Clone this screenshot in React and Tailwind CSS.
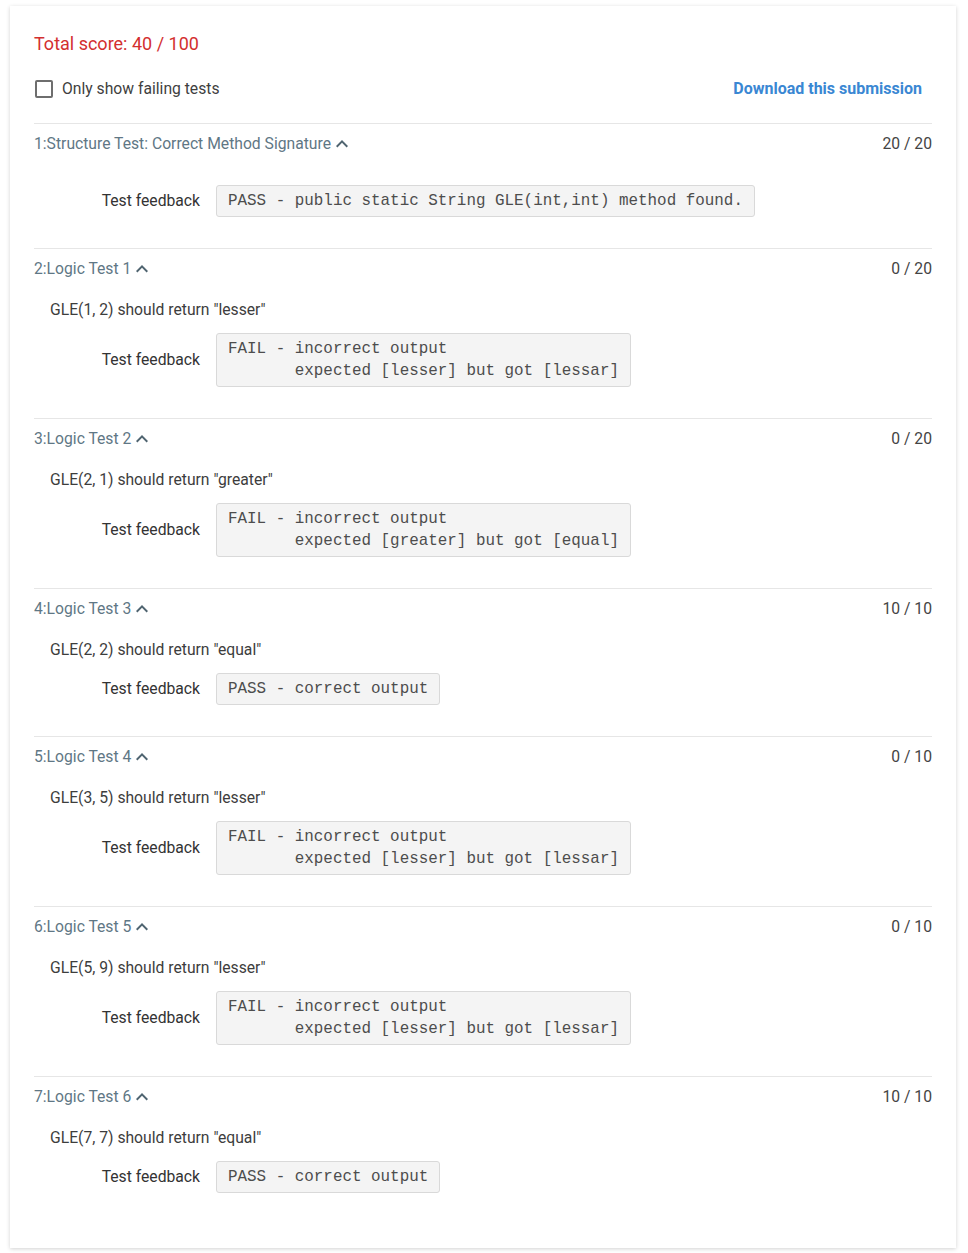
import React from "react";

const sections = [
  { title: "1:Structure Test: Correct Method Signature", score: "20 / 20", desc: null, lines: ["PASS - public static String GLE(int,int) method found."] },
  { title: "2:Logic Test 1", score: "0 / 20", desc: 'GLE(1, 2) should return "lesser"', lines: ["FAIL - incorrect output", "       expected [lesser] but got [lessar]"] },
  { title: "3:Logic Test 2", score: "0 / 20", desc: 'GLE(2, 1) should return "greater"', lines: ["FAIL - incorrect output", "       expected [greater] but got [equal]"] },
  { title: "4:Logic Test 3", score: "10 / 10", desc: 'GLE(2, 2) should return "equal"', lines: ["PASS - correct output"] },
  { title: "5:Logic Test 4", score: "0 / 10", desc: 'GLE(3, 5) should return "lesser"', lines: ["FAIL - incorrect output", "       expected [lesser] but got [lessar]"] },
  { title: "6:Logic Test 5", score: "0 / 10", desc: 'GLE(5, 9) should return "lesser"', lines: ["FAIL - incorrect output", "       expected [lesser] but got [lessar]"] },
  { title: "7:Logic Test 6", score: "10 / 10", desc: 'GLE(7, 7) should return "equal"', lines: ["PASS - correct output"] },
];

function Chevron() {
  return (
    <svg width="24" height="24" viewBox="0 0 24 24" className="shrink-0 -ml-[1px]">
      <path d="M12 8l-6 6 1.41 1.41L12 10.83l4.59 4.58L18 14z" fill="#4f6470" />
    </svg>
  );
}

function Section({ s, last }) {
  return (
    <div className={`border-t border-[#e6e6e6] pt-[8px] ${last ? "pb-0" : "pb-[31px]"}`}>
      <div className="flex items-center justify-between h-6">
        <div className="flex items-center text-[15.7px] text-[#5f7785]">
          <span>{s.title}</span>
          <Chevron />
        </div>
        <div className="text-[15.7px] text-[#444]">{s.score}</div>
      </div>
      {s.desc ? (
        <div className="pl-4 mt-[17px] text-[15.7px] leading-6 text-[#3d3d3d]">{s.desc}</div>
      ) : null}
      <div className={`flex items-center ${s.desc ? "mt-[11px]" : "mt-[29px]"}`}>
        <div className="w-[166px] shrink-0 text-right text-[15.7px] text-[#333]">Test feedback</div>
        <div className="ml-4 bg-[#f4f4f4] border border-[#d9d9d9] rounded-[3px] pl-[11px] pr-[11px] py-[4px]">
          <pre className="m-0 text-[15.9px] leading-[22px] text-[#4d4d4d] whitespace-pre" style={{ fontFamily: '"Liberation Mono", "Courier New", monospace' }}>
            {s.lines.join("\n")}
          </pre>
        </div>
      </div>
    </div>
  );
}

export default function App() {
  return (
    <div className="min-h-[1253px] bg-white pt-[6px] px-[10px] pb-[5px]" style={{ fontFamily: 'Roboto, "Noto Sans", sans-serif' }}>
      <div className="w-[946px] bg-white shadow-[0_1px_4px_rgba(0,0,0,0.18)] px-6 pt-[25px] pb-[55px]">
        <div className="text-[18px] leading-[26px] text-[#d32f2f]">Total score: 40 / 100</div>
        <div className="mt-3 h-10 flex items-center justify-between">
          <label className="flex items-center">
            <span className="ml-[1px] w-[18px] h-[18px] border-2 border-[#6e6e6e] rounded-[2px] inline-block" />
            <span className="ml-[9px] text-[15.7px] text-[#3f3f3f]">Only show failing tests</span>
          </label>
          <a className="pr-[10px] text-[16px] font-bold text-[#3a87d3]">Download this submission</a>
        </div>
        <div className="mt-[14px]">
          {sections.map((s, i) => (
            <Section key={i} s={s} last={i === sections.length - 1} />
          ))}
        </div>
      </div>
    </div>
  );
}
